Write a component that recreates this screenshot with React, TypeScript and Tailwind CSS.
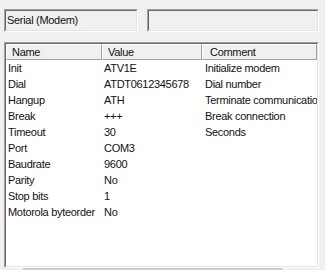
import React from "react";

const rows: [string, string, string][] = [
  ["Init", "ATV1E", "Initialize modem"],
  ["Dial", "ATDT0612345678", "Dial number"],
  ["Hangup", "ATH", "Terminate communication"],
  ["Break", "+++", "Break connection"],
  ["Timeout", "30", "Seconds"],
  ["Port", "COM3", ""],
  ["Baudrate", "9600", ""],
  ["Parity", "No", ""],
  ["Stop bits", "1", ""],
  ["Motorola byteorder", "No", ""],
];

function Sunken({ className, children }: { className: string; children?: React.ReactNode }) {
  return (
    <div className={`border-t border-l border-t-[#a0a0a0] border-l-[#a0a0a0] border-b border-r border-b-white border-r-white ${className}`}>
      <div className="h-full w-full border-t border-l border-t-[#696969] border-l-[#696969] border-b border-r border-b-[#e3e3e3] border-r-[#e3e3e3]">
        {children}
      </div>
    </div>
  );
}

export default function App() {
  return (
    <div
      className="w-[325px] h-[270px] bg-[#f0f0f0] overflow-hidden text-[11px] leading-none text-[#111] tracking-[-0.3px]"
      style={{ fontFamily: '"Liberation Sans", Arial, sans-serif' }}
    >
      <div className="flex gap-[9px] pl-[4px] pt-[9px]">
        <Sunken className="w-[134px] h-[23px] bg-[#f0f0f0]">
          <div className="flex h-full items-center pl-[1px]">Serial (Modem)</div>
        </Sunken>
        <Sunken className="w-[172px] h-[23px] bg-[#f0f0f0]" />
      </div>
      <div className="mt-[10px] ml-[4px]">
        <Sunken className="w-[315px] h-[226px] bg-white">
          <div className="grid grid-cols-[96px_100px_1fr] h-[16px] bg-[#f0f0f0]">
            {["Name", "Value", "Comment"].map((h, i) => (
              <div
                key={h}
                className={`flex items-center border-t border-l border-t-white border-l-white border-r border-b border-r-[#a0a0a0] border-b-[#a0a0a0] ${
                  i === 2 ? "pl-[7px]" : "pl-[5px]"
                }`}
              >
                {h}
              </div>
            ))}
          </div>
          {rows.map(([n, v, c]) => (
            <div key={n} className="grid grid-cols-[96px_100px_1fr] h-[16px] items-center whitespace-nowrap overflow-hidden">
              <div className="pl-[2px] overflow-hidden">{n}</div>
              <div className="pl-[2px] overflow-hidden">{v}</div>
              <div className="pl-[3px] overflow-hidden">{c}</div>
            </div>
          ))}
        </Sunken>
      </div>
      <div className="flex h-[2px]">
        <div className="w-[23px]" />
        <div className="w-[260px] bg-[#cdcdcd]" />
      </div>
    </div>
  );
}
